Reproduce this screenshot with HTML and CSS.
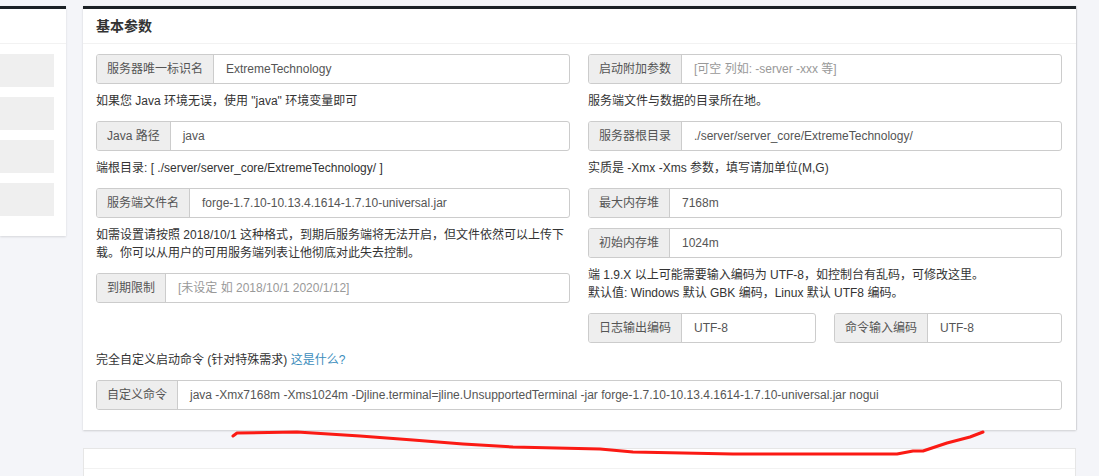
FILE: index.html
```html
<!DOCTYPE html>
<html lang="zh">
<head>
<meta charset="utf-8">
<title>基本参数</title>
<link rel="stylesheet" href="styles.css">
</head>
<body>
<div class="page">
  <aside class="side">
    <div class="side-head"></div>
    <div class="side-body">
      <div class="side-item"></div>
      <div class="side-item"></div>
      <div class="side-item"></div>
      <div class="side-item"></div>
    </div>
  </aside>
  <main class="content">
    <section class="box">
      <div class="box-head">基本参数</div>
      <div class="box-body">
        <div class="cols">
          <div class="col">
            <div class="group"><span class="addon">服务器唯一标识名</span><span class="field">ExtremeTechnology</span></div>
            <p class="help">如果您 Java 环境无误，使用 "java" 环境变量即可</p>
            <div class="group"><span class="addon">Java 路径</span><span class="field">java</span></div>
            <p class="help">端根目录: [ ./server/server_core/ExtremeTechnology/ ]</p>
            <div class="group"><span class="addon">服务端文件名</span><span class="field">forge-1.7.10-10.13.4.1614-1.7.10-universal.jar</span></div>
            <p class="help">如需设置请按照 2018/10/1 这种格式，到期后服务端将无法开启，但文件依然可以上传下载。你可以从用户的可用服务端列表让他彻底对此失去控制。</p>
            <div class="group"><span class="addon">到期限制</span><span class="field placeholder">[未设定 如 2018/10/1 2020/1/12]</span></div>
          </div>
          <div class="col">
            <div class="group"><span class="addon">启动附加参数</span><span class="field placeholder">[可空 列如: -server -xxx 等]</span></div>
            <p class="help">服务端文件与数据的目录所在地。</p>
            <div class="group"><span class="addon">服务器根目录</span><span class="field">./server/server_core/ExtremeTechnology/</span></div>
            <p class="help">实质是 -Xmx -Xms 参数，填写请加单位(M,G)</p>
            <div class="group"><span class="addon">最大内存堆</span><span class="field">7168m</span></div>
            <div class="group gap"><span class="addon">初始内存堆</span><span class="field">1024m</span></div>
            <p class="help">端 1.9.X 以上可能需要输入编码为 UTF-8，如控制台有乱码，可修改这里。<br>默认值: Windows 默认 GBK 编码，Linux 默认 UTF8 编码。</p>
            <div class="pair">
              <div class="group"><span class="addon">日志输出编码</span><span class="field">UTF-8</span></div>
              <div class="group"><span class="addon">命令输入编码</span><span class="field">UTF-8</span></div>
            </div>
          </div>
        </div>
        <p class="help">完全自定义启动命令 (针对特殊需求) <a class="link" href="#">这是什么?</a></p>
        <div class="group"><span class="addon">自定义命令</span><span class="field">java -Xmx7168m -Xms1024m -Djline.terminal=jline.UnsupportedTerminal -jar forge-1.7.10-10.13.4.1614-1.7.10-universal.jar nogui</span></div>
      </div>
    </section>
    <section class="box2">
      <div class="box2-head"></div>
    </section>
  </main>
</div>
<svg class="scribble" width="1099" height="476" viewBox="0 0 1099 476">
  <path d="M233 436 L237 433 L297 432 L360 436 L413 440 L463 444 L513 447 L600 449 L633 452 L733 454 L897 454 L913 451 L923 451 L947 443 L970 437 L983 432" fill="none" stroke="#fb1a14" stroke-width="3" stroke-linecap="round" stroke-linejoin="round"/>
</svg>
</body>
</html>
```

FILE: styles.css
```css
html, body {
  margin: 0;
  padding: 0;
}
body {
  background: #f4f5f9;
  font-family: "Liberation Sans", "Noto Sans CJK SC", Arial, sans-serif;
  font-size: 12px;
  color: #333;
  width: 1099px;
  height: 476px;
  overflow: hidden;
  position: relative;
}
.page {
  display: flex;
  align-items: flex-start;
  gap: 17px;
  padding-top: 6px;
}
.side {
  width: 66px;
  flex: none;
  background: #fff;
  border-top: 3px solid #1b2126;
  box-shadow: 0 1px 2px rgba(0,0,0,0.12);
}
.side-head {
  height: 34px;
  border-bottom: 1px solid #f2f2f2;
}
.side-body {
  display: flex;
  flex-direction: column;
  gap: 10px;
  padding: 10px 12px 20px 0;
}
.side-item {
  height: 33px;
  background: #efefef;
}
.content {
  width: 993px;
  flex: none;
  display: flex;
  flex-direction: column;
  gap: 18px;
}
.box {
  background: #fff;
  border-top: 3px solid #1b2126;
  box-shadow: 0 1px 2px rgba(0,0,0,0.15), 1px 0 1px rgba(0,0,0,0.08);
}
.box-head {
  height: 34px;
  line-height: 34px;
  padding-left: 13px;
  font-size: 14px;
  font-weight: bold;
  color: #333;
  border-bottom: 1px solid #f2f2f2;
}
.box-body {
  padding: 10px 14px 20px 13px;
}
.cols {
  display: grid;
  grid-template-columns: 474px 474px;
  column-gap: 18px;
  align-items: start;
}
.col {
  display: flex;
  flex-direction: column;
}
.group {
  display: flex;
  height: 30px;
  box-sizing: border-box;
  border: 1px solid #ccc;
  border-radius: 3px;
  overflow: hidden;
  background: #fff;
}
.group.gap {
  margin-top: 10px;
}
.addon {
  flex: none;
  background: #eee;
  color: #555;
  padding: 0 10px;
  line-height: 28px;
  border-right: 1px solid #ccc;
  white-space: nowrap;
}
.field {
  flex: 1;
  padding: 0 12px;
  line-height: 28px;
  color: #555;
  white-space: nowrap;
  overflow: hidden;
}
.field.placeholder {
  color: #999;
}
.help {
  margin: 8px 0 11px;
  line-height: 18px;
  color: #333;
}
.link {
  color: #3c8dbc;
  text-decoration: none;
}
.pair {
  display: grid;
  grid-template-columns: 228px 228px;
  column-gap: 18px;
}
.box2 {
  background: #fff;
  border: 1px solid #e6e6e6;
  height: 40px;
}
.box2-head {
  height: 19px;
  border-bottom: 1px solid #f2f2f2;
}
.scribble {
  position: absolute;
  left: 0;
  top: 0;
  pointer-events: none;
}
```
